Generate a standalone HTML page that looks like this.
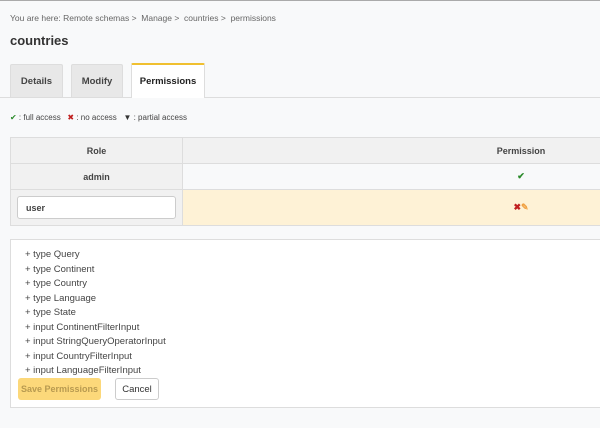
<!DOCTYPE html>
<html><head><style>
*{box-sizing:border-box;margin:0;padding:0}
body{width:600px;height:428px;background:#f8f9fa;font-family:"Liberation Sans",sans-serif;color:#333;position:relative;overflow:hidden;border-top:1px solid #aaa}
.a{position:absolute}
.bc{left:10px;top:12px;font-size:8.5px;color:#666}
h1{position:absolute;left:10px;top:32px;font-size:13px;font-weight:bold;color:#333}
.tab{position:absolute;top:63px;height:33px;background:#e8e8e8;border:1px solid #ddd;border-bottom:none;font-size:9.5px;font-weight:bold;color:#444;text-align:center;line-height:33px;border-radius:2px 2px 0 0}
.tab.on{background:#fff;border-top:2px solid #f0c030;top:62px;height:35px;color:#222}
.line{left:0;top:96px;width:600px;height:1px;background:#ddd}
.leg{left:10px;top:112px;font-size:8px;color:#444}
table{position:absolute;left:10px;top:136px;width:850px;border-collapse:collapse;font-size:9px;font-weight:bold;color:#444}
td{border:1px solid #ddd;text-align:center;height:26px}
td.r{background:#f1f1f1;width:172px}
.box{left:10px;top:238px;width:595px;height:169px;background:#fff;border:1px solid #ddd}
.it{position:absolute;left:14px;font-size:9.5px;color:#444}
.btn{position:absolute;top:138px;height:22px;font-size:9px;border-radius:3px;line-height:22px;text-align:center}
</style></head><body>
<div class="a bc">You are here: Remote schemas &gt;&nbsp; Manage &gt;&nbsp; countries &gt;&nbsp; permissions</div>
<h1>countries</h1>
<div class="tab" style="left:10px;width:53px">Details</div>
<div class="tab" style="left:71px;width:52px">Modify</div>
<div class="a line"></div>
<div class="tab on" style="left:131px;width:74px">Permissions</div>
<div class="a leg"><span style="color:#2a8a2a">✔</span> : full access &nbsp; <span style="color:#c02020">✖</span> : no access &nbsp; <b style="color:#333">▼</b> : partial access</div>
<table>
<tr style="background:#f1f1f1"><td class="r" style="height:26px">Role</td><td>Permission</td></tr>
<tr><td class="r">admin</td><td style="background:#f8f9fa;color:#2a8a2a">✔</td></tr>
<tr><td class="r" style="height:36px;padding:0 6px"><div style="background:#fff;border:1px solid #ccc;border-radius:3px;height:23px;text-align:left;padding-left:8px;line-height:22px">user</div></td><td style="background:#fef2d6"><span style="color:#c02020">✖</span><span style="color:#f0a040">✎</span></td></tr>
</table>
<div class="a box">
<div class="it" style="top:9px">+ type Query</div>
<div class="it" style="top:23.5px">+ type Continent</div>
<div class="it" style="top:38px">+ type Country</div>
<div class="it" style="top:52.5px">+ type Language</div>
<div class="it" style="top:67px">+ type State</div>
<div class="it" style="top:81.5px">+ input ContinentFilterInput</div>
<div class="it" style="top:96px">+ input StringQueryOperatorInput</div>
<div class="it" style="top:110.5px">+ input CountryFilterInput</div>
<div class="it" style="top:125px">+ input LanguageFilterInput</div>
<div class="btn" style="left:7px;width:83px;background:#fcd87a;color:#b89a50;font-weight:bold">Save Permissions</div>
<div class="btn" style="left:104px;width:44px;border:1px solid #ccc;background:#fff;color:#333;font-size:9.5px">Cancel</div>
</div>
</body></html>
